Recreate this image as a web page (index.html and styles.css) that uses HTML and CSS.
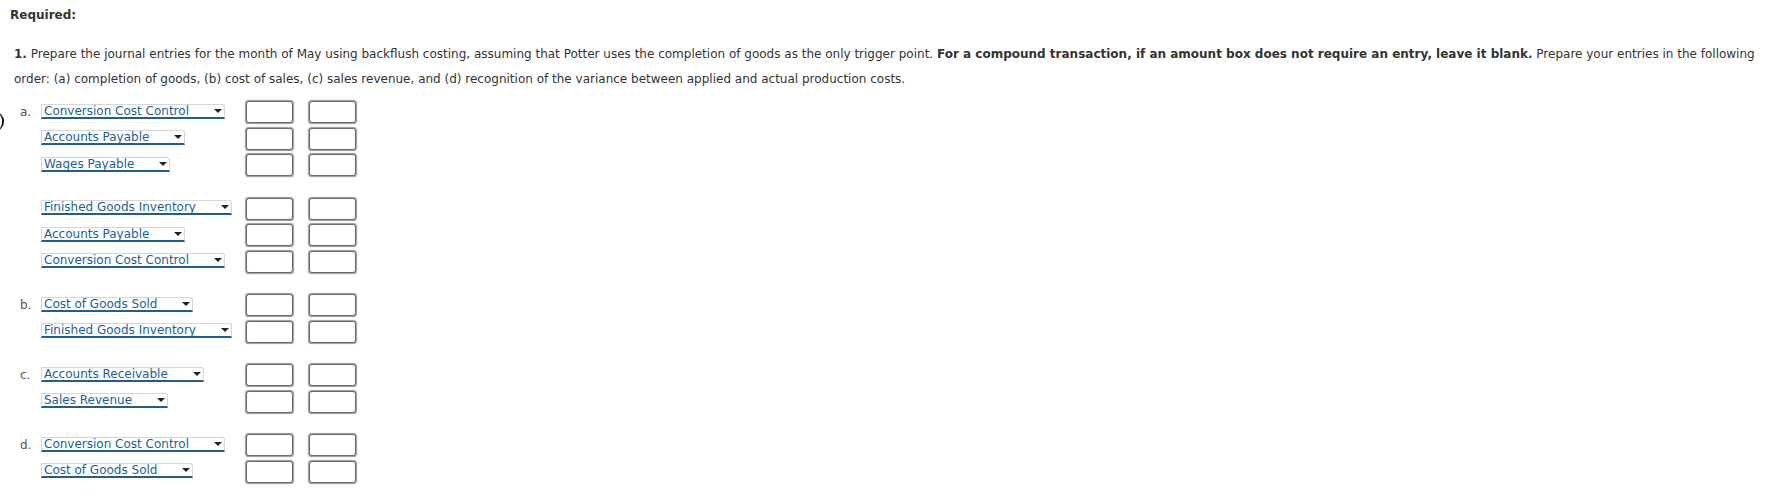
FILE: index.html
```html
<!DOCTYPE html>
<html lang="en">
<head>
<meta charset="utf-8">
<title>Required</title>
<link rel="stylesheet" href="styles.css">
</head>
<body>
<div class="edge-mark"></div>
<div class="page">
  <div class="required">Required:</div>
  <p class="question"><b>1.</b> Prepare the journal entries for the month of May using backflush costing, assuming that Potter uses the completion of goods as the only trigger point. <b>For a compound transaction, if an amount box does not require an entry, leave it blank.</b> Prepare your entries in the following order: (a) completion of goods, (b) cost of sales, (c) sales revenue, and (d) recognition of the variance between applied and actual production costs.</p>

  <div class="journal">
    <div class="group">
      <div class="row"><span class="lbl">a.</span><span class="acct"><span class="sel"><span class="sel-text">Conversion Cost Control</span><span class="arrow"></span></span></span><span class="amt"></span><span class="amt"></span></div>
      <div class="row"><span class="lbl"></span><span class="acct"><span class="sel"><span class="sel-text">Accounts Payable</span><span class="arrow"></span></span></span><span class="amt"></span><span class="amt"></span></div>
      <div class="row"><span class="lbl"></span><span class="acct"><span class="sel"><span class="sel-text">Wages Payable</span><span class="arrow"></span></span></span><span class="amt"></span><span class="amt"></span></div>
    </div>
    <div class="group">
      <div class="row"><span class="lbl"></span><span class="acct"><span class="sel"><span class="sel-text">Finished Goods Inventory</span><span class="arrow"></span></span></span><span class="amt"></span><span class="amt"></span></div>
      <div class="row"><span class="lbl"></span><span class="acct"><span class="sel"><span class="sel-text">Accounts Payable</span><span class="arrow"></span></span></span><span class="amt"></span><span class="amt"></span></div>
      <div class="row"><span class="lbl"></span><span class="acct"><span class="sel"><span class="sel-text">Conversion Cost Control</span><span class="arrow"></span></span></span><span class="amt"></span><span class="amt"></span></div>
    </div>
    <div class="group">
      <div class="row"><span class="lbl">b.</span><span class="acct"><span class="sel"><span class="sel-text">Cost of Goods Sold</span><span class="arrow"></span></span></span><span class="amt"></span><span class="amt"></span></div>
      <div class="row"><span class="lbl"></span><span class="acct"><span class="sel"><span class="sel-text">Finished Goods Inventory</span><span class="arrow"></span></span></span><span class="amt"></span><span class="amt"></span></div>
    </div>
    <div class="group">
      <div class="row"><span class="lbl">c.</span><span class="acct"><span class="sel"><span class="sel-text">Accounts Receivable</span><span class="arrow"></span></span></span><span class="amt"></span><span class="amt"></span></div>
      <div class="row"><span class="lbl"></span><span class="acct"><span class="sel"><span class="sel-text">Sales Revenue</span><span class="arrow"></span></span></span><span class="amt"></span><span class="amt"></span></div>
    </div>
    <div class="group">
      <div class="row"><span class="lbl">d.</span><span class="acct"><span class="sel"><span class="sel-text">Conversion Cost Control</span><span class="arrow"></span></span></span><span class="amt"></span><span class="amt"></span></div>
      <div class="row"><span class="lbl"></span><span class="acct"><span class="sel"><span class="sel-text">Cost of Goods Sold</span><span class="arrow"></span></span></span><span class="amt"></span><span class="amt"></span></div>
    </div>
  </div>
</div>
</body>
</html>
```
FILE: styles.css
```css
html, body {
  margin: 0;
  padding: 0;
  background: #ffffff;
}
body {
  font-family: "DejaVu Sans", Verdana, sans-serif;
  font-size: 12px;
  color: #333333;
  position: relative;
}
.edge-mark {
  position: absolute;
  left: -7px;
  top: 112px;
  width: 9px;
  height: 19px;
  border-right: 2px solid #111;
  border-radius: 0 9px 9px 0;
}
.page {
  padding: 7px 10px 0 10px;
}
.required {
  font-weight: bold;
  line-height: 16px;
  margin-bottom: 19px;
}
.question {
  margin: 0 0 8px 4px;
  line-height: 24.5px;
}
.journal {
  padding-left: 10px;
}
.group {
  margin-bottom: 17px;
}
.row {
  display: flex;
  align-items: center;
  height: 26.5px;
}
.lbl {
  width: 21px;
  color: #555555;
  flex: none;
}
.acct {
  width: 205px;
  flex: none;
  display: flex;
  align-items: center;
}
.sel {
  display: inline-flex;
  align-items: center;
  height: 12px;
  padding: 0 2px 0 2px;
  background: #ffffff;
  border: 1px solid #d6d6d6;
  border-bottom: 2px solid #215e8e;
  border-radius: 0 3px 0 0;
  color: #1b5e9e;
  line-height: 12px;
  margin-top: -2px;
}
.sel-text {
  white-space: nowrap;
}
.arrow {
  margin-left: 25px;
  width: 0;
  height: 0;
  border-left: 4px solid transparent;
  border-right: 4px solid transparent;
  border-top: 4px solid #222222;
}
.amt {
  flex: none;
  width: 45px;
  height: 20px;
  border: 1px solid #6a6a6a;
  border-radius: 3px;
  box-shadow: 0 0 1px 0.6px #9a9a9a;
  background: #ffffff;
  margin-right: 16px;
}
```
